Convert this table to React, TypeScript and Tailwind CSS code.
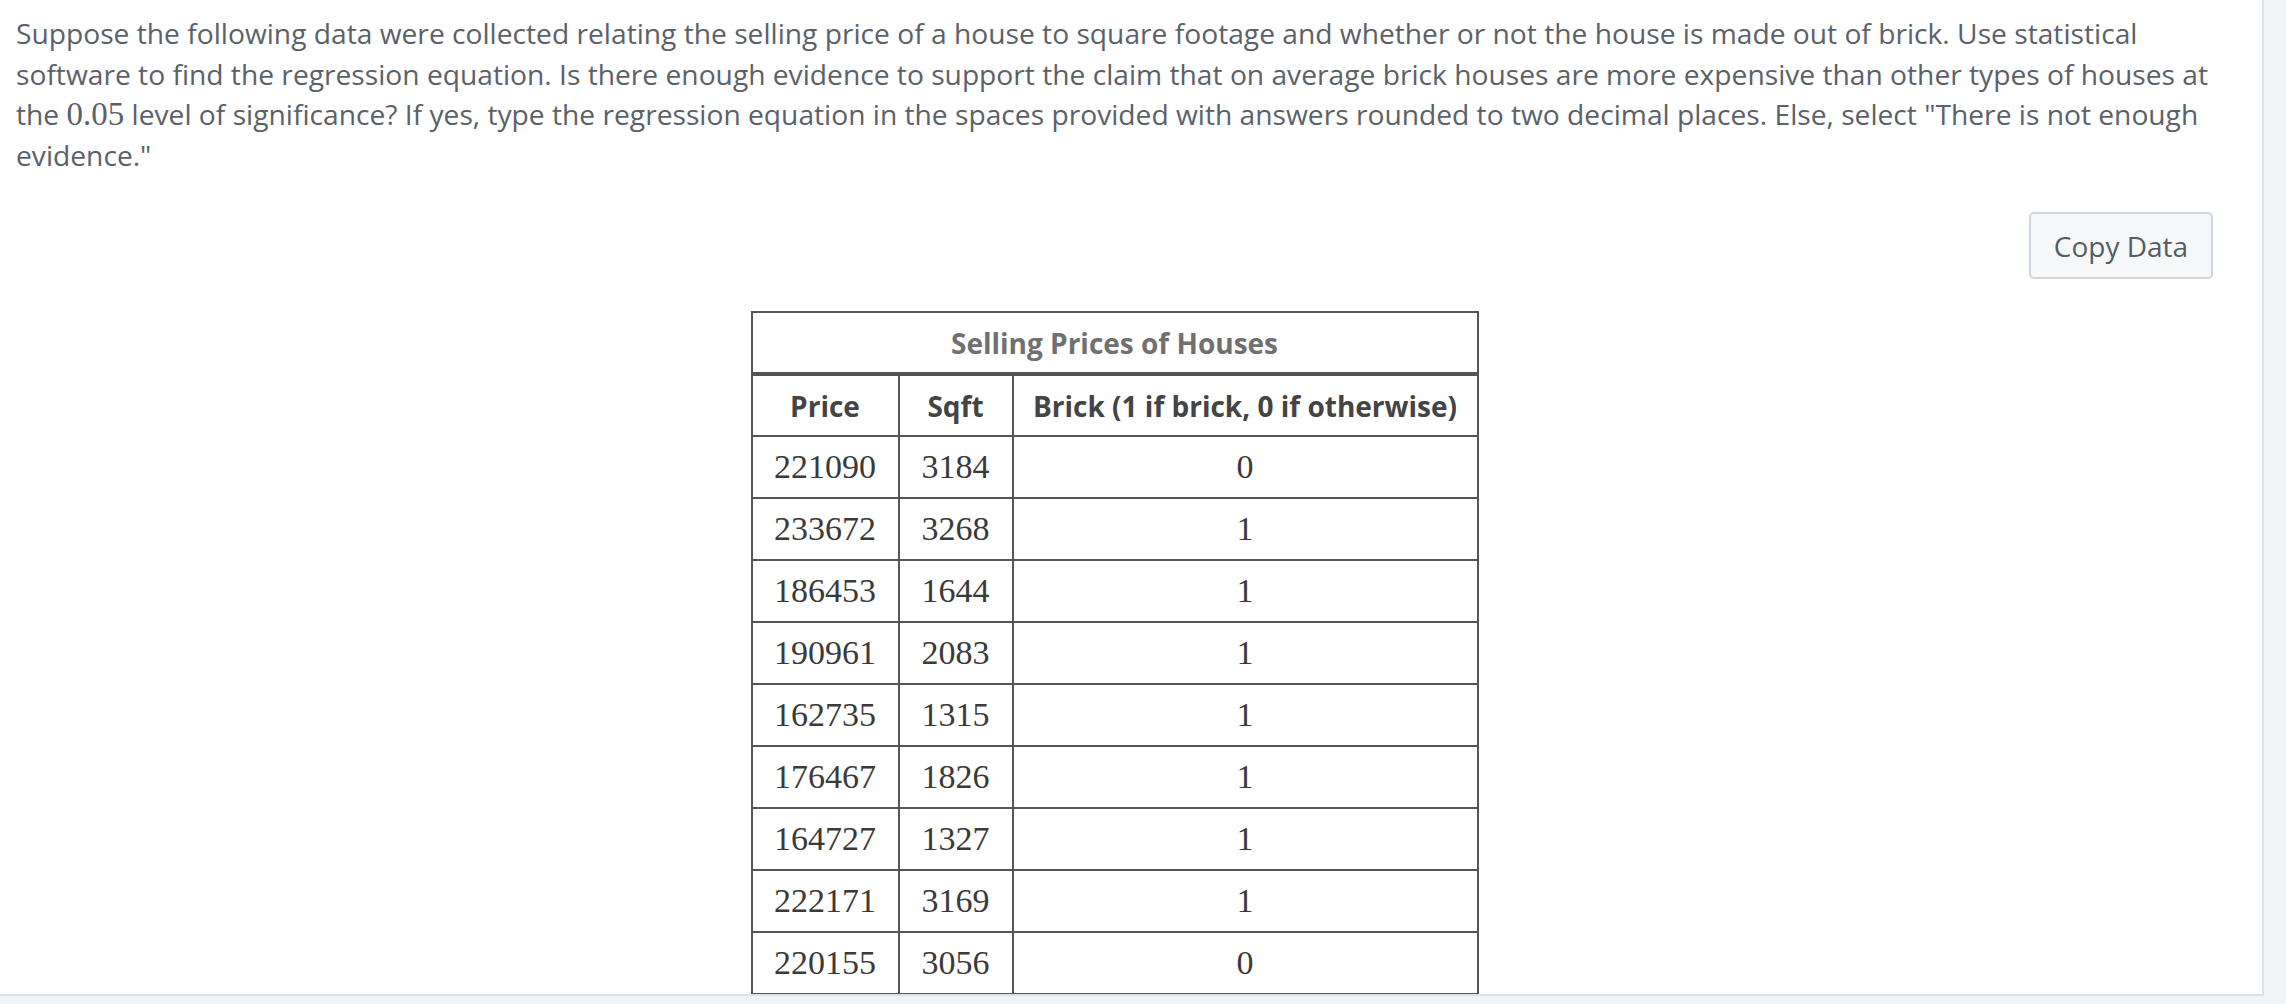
import React from "react";

const ROWS: [string, string, string][] = [
  ["221090", "3184", "0"],
  ["233672", "3268", "1"],
  ["186453", "1644", "1"],
  ["190961", "2083", "1"],
  ["162735", "1315", "1"],
  ["176467", "1826", "1"],
  ["164727", "1327", "1"],
  ["222171", "3169", "1"],
  ["220155", "3056", "0"],
];

const sans = { fontFamily: '"Open Sans", "Noto Sans", sans-serif' };
const serif = { fontFamily: '"Liberation Serif", "Times New Roman", serif' };

const HouseTable = () => {
  return (
    <table className="mx-auto border-collapse border-2 border-[#555]">
      <thead>
        <tr>
          <th
            colSpan={3}
            className="h-[62px] border-2 border-b-4 border-[#555] text-[28px] font-bold text-[#707070]"
            style={sans}
          >
            Selling Prices of Houses
          </th>
        </tr>
        <tr className="text-[28px] font-bold text-[#444]" style={sans}>
          <th className="h-[62px] w-[147px] border-2 border-[#555]">Price</th>
          <th className="w-[114px] border-2 border-[#555]">Sqft</th>
          <th className="w-[465px] border-2 border-[#555]">
            Brick (1 if brick, 0 if otherwise)
          </th>
        </tr>
      </thead>
      <tbody className="text-[34px] text-[#3a3a3a]" style={serif}>
        {ROWS.map((row) => (
          <tr key={row[0]}>
            {row.map((cell, i) => (
              <td
                key={i}
                className="h-[62px] border-2 border-[#555] text-center leading-none"
              >
                {cell}
              </td>
            ))}
          </tr>
        ))}
      </tbody>
    </table>
  );
};

export default function App() {
  return (
    <div className="flex h-[1004px] w-full overflow-hidden bg-[#f2f3f5]">
      <div className="flex w-[2264px] shrink-0 flex-col">
        <div className="h-[996px] shrink-0 overflow-hidden border-r-2 border-b-2 border-[#e1e1e1] bg-white">
          <div className="pt-[13px] pr-[49px] pl-4">
            <p
              className="text-[28.2px] leading-[40.5px] text-[#5b6169]"
              style={sans}
            >
              Suppose the following data were collected relating the selling
              price of a house to square footage and whether or not the house
              is made out of brick. Use statistical software to find the
              regression equation. Is there enough evidence to support the
              claim that on average brick houses are more expensive than other
              types of houses at the{" "}
              <span className="text-[33px] leading-none" style={serif}>
                0.05
              </span>{" "}
              level of significance? If yes, type the regression equation in
              the spaces provided with answers rounded to two decimal places.
              Else, select "There is not enough evidence."
            </p>
            <div className="mt-[37px] flex justify-end">
              <button
                className="h-[67px] w-[184px] rounded-[5px] border-2 border-[#cfd8df] bg-[#f6f8fa] text-[28px] text-[#555c64]"
                style={sans}
              >
                Copy Data
              </button>
            </div>
            <div className="mt-[32px]">
              <HouseTable />
            </div>
          </div>
        </div>
      </div>
      <div className="flex-1" />
    </div>
  );
}
